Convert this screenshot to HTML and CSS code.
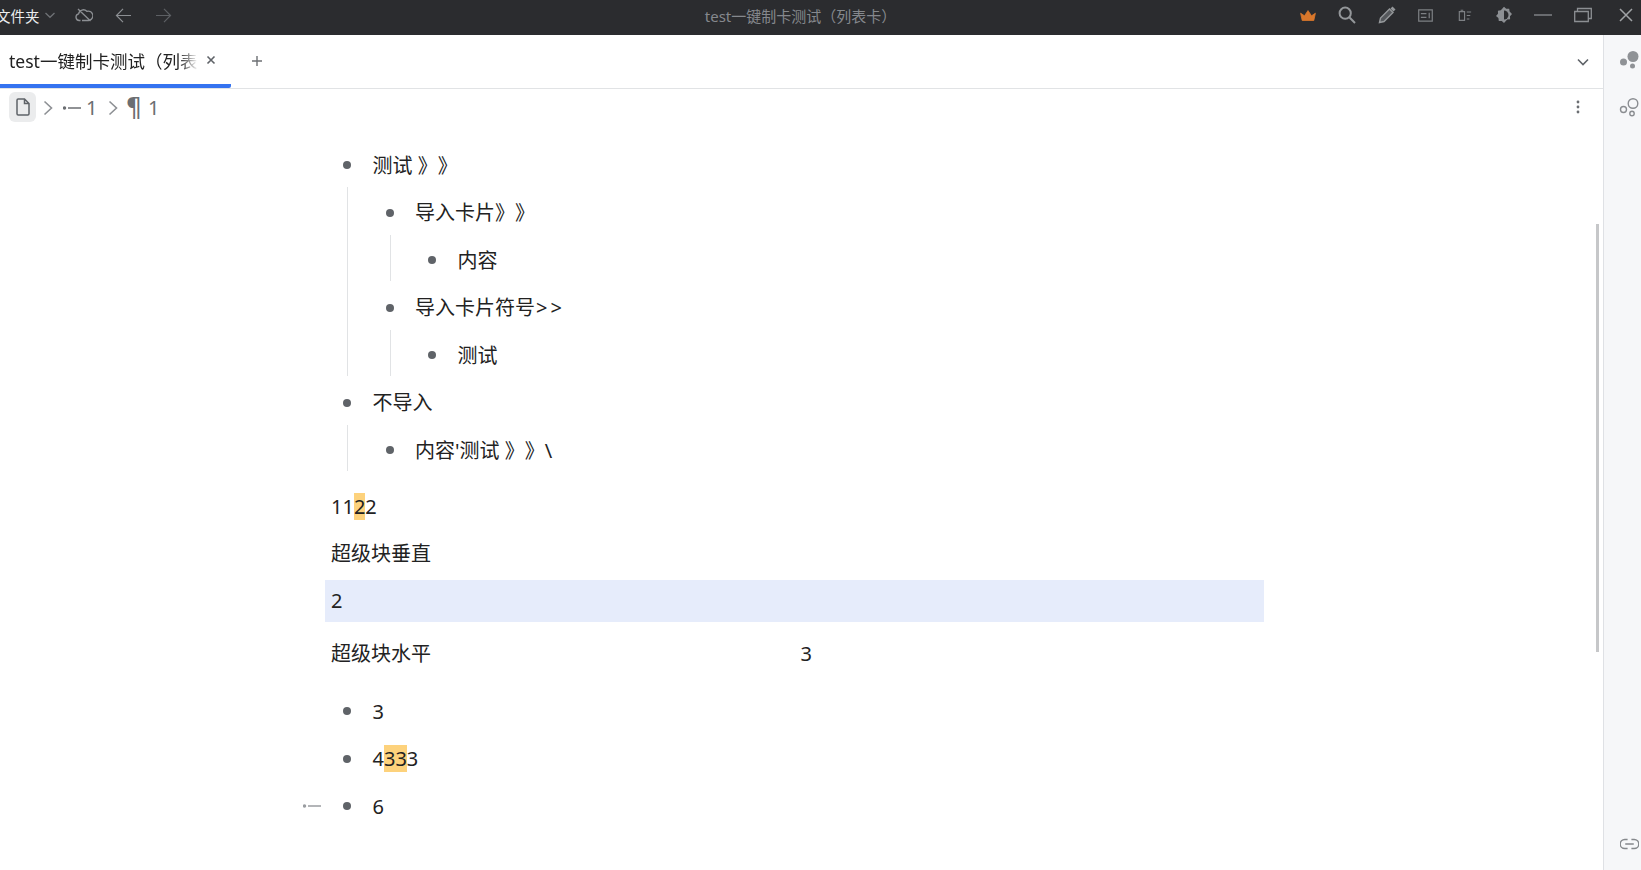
FILE: index.html
```html
<!DOCTYPE html>
<html lang="zh-CN">
<head>
<meta charset="utf-8">
<title>test一键制卡测试（列表卡）</title>
<link rel="stylesheet" href="styles.css">
</head>
<body>
<header class="titlebar">
  <div class="tb-left">
    <span class="folder">文件夹</span>
    <svg class="ic chev" viewBox="0 0 12 12"><path d="M1.5 4L6 8.3 10.5 4"/></svg>
    <svg class="ic cloud" viewBox="0 0 18 16"><path d="M5.5 13.5H4.2A3.4 3.4 0 0 1 3.6 6.8 4.8 4.8 0 0 1 11.8 4.3 4 4 0 0 1 14.6 13.2 3 3 0 0 1 13.5 13.5H7M3 2l12.5 12"/></svg>
    <svg class="ic arrow" viewBox="0 0 18 16"><path d="M17 8H1.5M8.5 1L1.5 8l7 7"/></svg>
    <svg class="ic arrow dim" viewBox="0 0 18 16"><path d="M1 8h15.5M9.5 1l7 7-7 7"/></svg>
  </div>
  <div class="tb-title">test一键制卡测试（列表卡）</div>
  <div class="tb-right">
    <svg class="tool crown" viewBox="0 0 18 14"><path class="fill-o" d="M3.2 12.5L1.6 5.2l3.9 2.6L9 2.600l3.5 5.2 3.9-2.6-1.6 7.3z"/></svg>
    <svg class="tool search" viewBox="0 0 18 18"><circle cx="7.2" cy="7.2" r="5.6"/><path d="M11.3 11.3L17 17"/></svg>
    <svg class="tool pencil" viewBox="0 0 18 18"><path class="fill-p" d="M1.500 16.500l1-4.500L11.500 3l3.500 3.500-9 9z"/><path class="thick" d="M13.500 1.500L16.500 4.500"/></svg>
    <svg class="tool reader" viewBox="0 0 16 14"><path d="M.7 1h14.600v12H.7zM3 5h6M3 9h6M12 4v6"/></svg>
    <svg class="tool outline" viewBox="0 0 16 14"><path d="M1.500 2.500h6v10h-6zM3 1h3M10 3h5M10 7h4M10 11h3"/></svg>
    <svg class="tool theme" viewBox="0 0 18 18"><path class="fill-g" d="M9 .8l2.200 2 3-.1.4 2.900 2.400 2.400-2 2.200.1 3-2.900.4L9 16.900l-2.200-1.900-3 .1-.4-3-2.400-2.200 2-2.200-.1-3 2.900-.4z"/><path class="fill-d" d="M9 4.500a4.500 4.500 0 0 1 0 9z"/></svg>
    <svg class="tool" viewBox="0 0 18 18"><path d="M0 9h18"/></svg>
    <svg class="tool" viewBox="0 0 18 18"><path d="M.7 5.500h13.600v10H.7zM3.500 5.500v-3h13.800v10h-3"/></svg>
    <svg class="tool close" viewBox="0 0 14 14"><path d="M1 1l12 12M13 1L1 13"/></svg>
  </div>
</header>

<div class="body">
  <div class="workspace">
    <div class="tabbar">
      <div class="tab">
        <span class="tab-text">test一键制卡测试（列表卡）</span>
        <svg class="tab-x" viewBox="0 0 10 10"><path d="M1.500 1.500l7 7M8.500 1.500l-7 7"/></svg>
      </div>
      <svg class="tab-plus" viewBox="0 0 12 12"><path d="M6 1v10M1 6h10"/></svg>
      <svg class="tab-more" viewBox="0 0 12 8"><path d="M1 1.500l5 5 5-5"/></svg>
    </div>

    <nav class="crumbs">
      <span class="doc-btn"><svg viewBox="0 0 14 18"><path d="M1 2.200A1.200 1.200 0 0 1 2.200 1H8.500L13 5.500v10.300a1.200 1.200 0 0 1-1.200 1.200H2.200A1.200 1.200 0 0 1 1 15.800zM8.500 1v4.500H13"/></svg></span>
      <svg class="crumb-sep" viewBox="0 0 10 16"><path d="M1.500 1.500L8.500 8l-7 6.500"/></svg>
      <span class="crumb crumb-item"><svg class="li-mark" viewBox="0 0 18 4"><circle cx="1.500" cy="2" r="1"/><path d="M5 2h13"/></svg>1</span>
      <svg class="crumb-sep" viewBox="0 0 10 16"><path d="M1.500 1.500L8.500 8l-7 6.500"/></svg>
      <span class="crumb"><span class="pilcrow">¶</span>1</span>
      <svg class="crumb-dots" viewBox="0 0 4 14"><circle cx="2" cy="2" r="1.400"/><circle cx="2" cy="7" r="1.400"/><circle cx="2" cy="12" r="1.400"/></svg>
    </nav>

    <main class="editor">
      <ul class="list">
        <li class="item"><div class="row"><i class="dot"></i><span>测试 》》</span></div>
          <ul class="nest">
            <li class="item"><div class="row"><i class="dot"></i><span>导入卡片》》</span></div>
              <ul class="nest"><li class="item"><div class="row"><i class="dot"></i><span>内容</span></div></li></ul>
            </li>
            <li class="item"><div class="row"><i class="dot"></i><span>导入卡片符号<b class="gt">&gt;&gt;</b></span></div>
              <ul class="nest"><li class="item"><div class="row"><i class="dot"></i><span>测试</span></div></li></ul>
            </li>
          </ul>
        </li>
        <li class="item"><div class="row"><i class="dot"></i><span>不导入</span></div>
          <ul class="nest">
            <li class="item"><div class="row"><i class="dot"></i><span>内容'测试 》》\</span></div></li>
          </ul>
        </li>
      </ul>

      <p class="para para-first">11<mark>2</mark>2</p>
      <p class="para para-next">超级块垂直</p>
      <p class="para para-selected">2</p>
      <div class="columns">
        <p class="para">超级块水平</p>
        <p class="para">3</p>
      </div>

      <ul class="list list-last">
        <li class="item"><div class="row"><i class="dot"></i><span>3</span></div></li>
        <li class="item"><div class="row"><i class="dot"></i><span>4<mark>33</mark>3</span></div></li>
        <li class="item hover-item">
          <svg class="gutter" viewBox="0 0 18 4"><circle cx="1.500" cy="2" r="1"/><path d="M5 2h13"/></svg>
          <div class="row"><i class="dot"></i><span>6</span></div>
        </li>
      </ul>
    </main>
    <div class="scrollbar"></div>
  </div>

  <aside class="sidebar">
    <svg class="side-ic" viewBox="0 0 20 20"><circle class="fill-s" cx="14" cy="6.500" r="5.500"/><circle class="fill-s" cx="4.500" cy="12" r="3.500"/><circle class="fill-s" cx="13.500" cy="16" r="2.500"/></svg>
    <svg class="side-ic line" viewBox="0 0 20 20"><circle cx="14" cy="6.500" r="4.800"/><circle cx="4.500" cy="12.500" r="3"/><circle cx="13" cy="16.500" r="2.200"/></svg>
    <svg class="side-link" viewBox="0 0 20 12"><path d="M8 1.200H5a4.800 4.800 0 0 0 0 9.600h3M12 1.200h3a4.800 4.800 0 0 1 0 9.600h-3M5.500 6h9"/></svg>
  </aside>
</div>
</body>
</html>
```

FILE: styles.css
```css
* { box-sizing: border-box; }
html, body { margin: 0; height: 100%; overflow: hidden; }
body {
  display: flex;
  flex-direction: column;
  height: 870px;
  background: #fff;
  color: #222;
  font-family: "Noto Sans", "Noto Sans CJK SC", sans-serif;
  text-spacing-trim: space-all;
}
ul { list-style: none; margin: 0; padding: 0; }
p { margin: 0; }
svg { display: block; flex: none; fill: none; stroke: currentColor; }

/* title bar */
.titlebar {
  flex: none;
  height: 35px;
  padding-bottom: 5px;
  background: #2b2c2f;
  display: flex;
  align-items: center;
  overflow: hidden;
}
.tb-left { width: 180px; flex: none; display: flex; align-items: center; color: #8c8f93; }
.folder { color: #eceef0; font-size: 14.500px; margin-left: -4px; white-space: nowrap; }
.ic { stroke-width: 1.300; }
.chev { width: 12px; height: 12px; margin-left: 4px; color: #6e7175; }
.cloud { width: 18px; height: 16px; margin-left: 19px; }
.arrow { width: 17px; height: 15px; margin-left: 22px; }
.arrow.dim { color: #5d6064; margin-left: 23px; }
.tb-title { flex: none; width: 1119px; padding-left: 122px; text-align: center; font-size: 15px; color: #85888d; white-space: nowrap; }
.tb-right { flex: 1; display: flex; align-items: center; color: #8c8f93; }
.tool { width: 18px; height: 18px; margin-right: 21.400px; stroke-width: 1.300; }
.tool.crown { width: 18px; height: 14px; }
.tool.search { stroke-width: 2; color: #94979a; margin-right: 21.400px; }
.tool.pencil { stroke-width: 1.400; color: #94979a; }
.tool.reader { width: 15px; height: 13px; margin-left: 1px; margin-right: 22.400px; color: #7d8084; }
.tool.outline { width: 14px; height: 13px; margin-left: 2px; margin-right: 23.400px; color: #7d8084; }
.tool .thick { stroke-width: 2.800; }
.tool.close { width: 14px; height: 14px; margin-left: 6px; margin-right: 0; stroke-width: 1.500; color: #a0a3a6; }
.fill-o { fill: #d9772b; stroke: #d9772b; stroke-width: .8; }
.fill-g { fill: #8c8f93; stroke: none; }
.fill-d { fill: #2b2c2f; stroke: none; }
.fill-p { fill: #55585c; }

/* layout */
.body { flex: 1; min-height: 0; display: flex; }
.workspace { flex: 1; min-width: 0; display: flex; flex-direction: column; position: relative; }
.sidebar {
  flex: none;
  width: 38px;
  background: #f6f7f9;
  border-left: 1px solid #dfe1e5;
  display: flex;
  flex-direction: column;
  align-items: center;
  padding: 15px 0 20px;
  color: #8a8d91;
}
.side-ic { width: 20px; height: 20px; margin-left: 13px; margin-bottom: 27px; stroke: none; }
.side-ic.line { stroke: currentColor; stroke-width: 1.400; }
.fill-s { fill: #8f9296; }
.side-link { width: 19px; height: 12px; margin-top: auto; margin-left: 13px; stroke-width: 1.500; color: #85888c; }

/* tabs */
.tabbar {
  flex: none;
  height: 54px;
  border-bottom: 1px solid #e1e3e5;
  display: flex;
  align-items: flex-start;
  position: relative;
}
.tab {
  width: 231px;
  height: 53px;
  border-bottom: 4px solid #3573f0;
  border-bottom-right-radius: 2px;
  display: flex;
  align-items: center;
  padding: 1px 0 0 9px;
  margin-bottom: -1px;
}
.tab-text {
  width: 189px;
  font-size: 17.500px;
  color: #222;
  white-space: nowrap;
  overflow: hidden;
  -webkit-mask-image: linear-gradient(to right, #000 90%, transparent 100%);
  mask-image: linear-gradient(to right, #000 90%, transparent 100%);
}
.tab-x { width: 10px; height: 10px; margin-left: 8px; stroke-width: 1.600; color: #5f6368; }
.tab-plus { width: 12px; height: 12px; margin: 20px 0 0 20px; stroke-width: 1.400; color: #6d7074; }
.tab-more { width: 12px; height: 8px; margin: 23px 14px 0 auto; stroke-width: 1.600; color: #5f6368; }

/* breadcrumb */
.crumbs { flex: none; height: 36px; display: flex; align-items: center; padding: 0 20px 0 9px; color: #6b6e72; }
.doc-btn { width: 27px; height: 30px; border-radius: 6px; background: #ebeced; display: flex; align-items: center; justify-content: center; color: #5f6368; }
.doc-btn svg { width: 14px; height: 18px; stroke-width: 1.500; }
.crumb-sep { width: 10px; height: 16px; margin: 1px 8px 0 7px; color: #8d9094; stroke-width: 1.600; }
.crumb { display: flex; align-items: center; font-size: 20px; padding-top: 1px; margin-left: 2px; }
.crumb-item { margin-right: 4px; }
.li-mark { width: 18px; height: 4px; margin-right: 5px; stroke-width: 1.500; fill: #6b6e72; }
.pilcrow { font-family: "DejaVu Sans", sans-serif; font-size: 26px; margin: 0 6px 0 -3px; line-height: 1; }
.crumb-dots { width: 4px; height: 14px; margin-left: auto; fill: #6b6e72; stroke: none; margin-right: 3px; }

/* editor */
.editor { flex: none; margin-left: 325px; width: 939px; padding-top: 21px; font-size: 20px; color: #222; }
.row { height: 38px; display: flex; align-items: center; white-space: pre; }
.row span { padding-bottom: 2px; }
.list-last .row span { padding-bottom: 0; }
.dot { width: 8px; height: 8px; border-radius: 50%; background: #5f6368; margin: 0 21.500px 0 18px; flex: none; }
.gt { font-weight: 400; letter-spacing: 3px; margin-left: 1px; }
.item { margin-top: 9.500px; position: relative; }
.item:first-child { margin-top: 0; }
.nest {
  margin: 3px 0 -2px 22px;
  padding: 6.500px 0 2px 19.500px;
  border-left: 1px solid #e1e3e5;
}
.para { height: 38px; line-height: 38px; padding-left: 6px; white-space: pre; }
.para-first { margin-top: 18.500px; }
.para-next { margin-top: 9.500px; }
.para-selected { height: 42px; line-height: 42px; margin-top: 7px; background: #e6ecfb; }
.columns { display: grid; grid-template-columns: 1fr 1fr; margin-top: 13px; }
.list-last { margin-top: 19px; }
mark { background: #fdd27c; color: inherit; }
.gutter { position: absolute; left: -22px; top: 17px; width: 18px; height: 4px; stroke-width: 1.500; color: #9a9da1; fill: #9a9da1; }
.scrollbar { position: absolute; left: 1596px; top: 189px; width: 3px; height: 428px; background: #c6c7c9; }
```
